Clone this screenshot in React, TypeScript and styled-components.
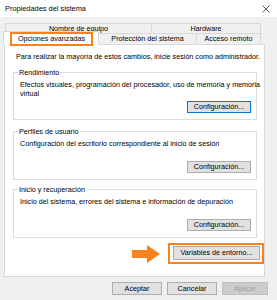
import styled, { createGlobalStyle } from "styled-components";

const GlobalStyle = createGlobalStyle`
  html, body {
    margin: 0;
    padding: 0;
    background: #f0f0f0;
  }
  body {
    font-family: "Liberation Sans", Arial, sans-serif;
    font-size: 7.2px;
    color: #000;
  }
`;

const Window = styled.div`
  width: 277px;
  height: 300px;
  overflow: hidden;
  background-color: #f0f0f0;
  display: flex;
  flex-direction: column;
`;

const TitleBar = styled.div`
  height: 17px;
  background-color: #fff;
  display: flex;
  align-items: center;
  justify-content: space-between;
  padding: 0 7px 0 5px;
  box-sizing: border-box;
  font-size: 7.4px;
`;

const Content = styled.div`
  padding: 6px 12px 0 4px;
  display: flex;
  flex-direction: column;
`;

const TabRow = styled.div<{ $front?: boolean }>`
  display: flex;
  align-items: flex-end;
  height: ${(p) => (p.$front ? 11 : 10)}px;
  margin-left: ${(p) => (p.$front ? -1 : 1)}px;
  position: relative;
  z-index: ${(p) => (p.$front ? 2 : 1)};
`;

const Tab = styled.div<{ $width: number; $first?: boolean }>`
  width: ${(p) => p.$width}px;
  height: 100%;
  box-sizing: border-box;
  border: 1px solid #d9d9d9;
  border-bottom: none;
  border-left: ${(p) => (p.$first ? "1px solid #d9d9d9" : "none")};
  background-color: #f0f0f0;
  display: flex;
  align-items: center;
  justify-content: center;
  line-height: 1;
  white-space: nowrap;
`;

const ActiveTab = styled.div`
  width: 96px;
  height: 14px;
  margin-bottom: -1px;
  box-sizing: border-box;
  border: 1px solid #d9d9d9;
  border-bottom: none;
  background-color: #fff;
`;

const Highlight = styled.div`
  border: 2.5px solid #f7821e;
  box-sizing: border-box;
  display: flex;
  align-items: center;
  justify-content: center;
`;

const ActiveLabel = styled(Highlight)`
  width: 83px;
  height: 14px;
  margin-left: 6px;
  line-height: 1;
  white-space: nowrap;
`;

const Panel = styled.div`
  height: 233px;
  box-sizing: border-box;
  background-color: #fff;
  border: 1px solid #d9d9d9;
  padding: 7px 7px 0 8px;
  display: flex;
  flex-direction: column;
`;

const Intro = styled.div`
  line-height: 10px;
  margin-left: 3px;
  white-space: nowrap;
`;

const Group = styled.section<{ $height: number; $gap: number }>`
  margin-top: ${(p) => p.$gap}px;
  padding: 0 5px 6px 6px;
  height: ${(p) => p.$height}px;
  box-sizing: border-box;
  border: 1px solid #dcdcdc;
  display: flex;
  flex-direction: column;
`;

const Legend = styled.div`
  align-self: flex-start;
  margin: -5px 0 0 -2px;
  padding: 0 1px;
  line-height: 9px;
  background-color: #fff;
  white-space: nowrap;
`;

const GroupText = styled.div`
  line-height: 9px;
  margin-top: 3px;
  white-space: nowrap;
`;

const ButtonRow = styled.div`
  margin-top: auto;
  display: flex;
  justify-content: flex-end;
`;

const Button = styled.button<{ $width: number; $focused?: boolean }>`
  width: ${(p) => p.$width}px;
  height: 12px;
  padding: 0;
  box-sizing: border-box;
  font-family: inherit;
  font-size: 7.2px;
  line-height: 1;
  color: #000;
  background-color: #e1e1e1;
  border: 1px solid ${(p) => (p.$focused ? "#0078d7" : "#adadad")};
  border-radius: 0;
  white-space: nowrap;

  &:disabled {
    color: #a0a0a0;
    background-color: #cccccc;
    border-color: #bfbfbf;
  }
`;

const EnvRow = styled.div`
  margin: 5px -7px 0 0;
  display: flex;
  justify-content: flex-end;
  align-items: center;
  gap: 8px;
`;

const EnvFrame = styled(Highlight)`
  width: 96px;
  height: 21px;
  padding: 1px 2px 2px 3px;
`;

const EnvButton = styled(Button)`
  height: 14px;
`;

const Footer = styled.div`
  display: flex;
  justify-content: flex-end;
  gap: 5px;
  padding: 5px 9px 0 0;
`;

const FooterButton = styled(Button)`
  height: 13px;
`;

const CloseIcon = () => (
  <svg width="8" height="8" viewBox="0 0 8 8">
    <path d="M0.5 0.5 L7.5 7.5 M7.5 0.5 L0.5 7.5" stroke="#333" strokeWidth="0.8" />
  </svg>
);

const Arrow = () => (
  <svg width="28" height="18" viewBox="0 0 28 18">
    <polygon points="0,5 15,5 15,0 28,9 15,18 15,13 0,13" fill="#f7841f" />
  </svg>
);

export default function App() {
  return (
    <>
      <GlobalStyle />
      <Window>
        <TitleBar>
          <span>Propiedades del sistema</span>
          <CloseIcon />
        </TitleBar>
        <Content>
          <TabRow>
            <Tab $width={147} $first>
              Nombre de equipo
            </Tab>
            <Tab $width={109}>Hardware</Tab>
          </TabRow>
          <TabRow $front>
            <ActiveTab>
              <ActiveLabel>Opciones avanzadas</ActiveLabel>
            </ActiveTab>
            <Tab $width={98}>Protección del sistema</Tab>
            <Tab $width={64}>Acceso remoto</Tab>
          </TabRow>
          <Panel>
            <Intro>
              Para realizar la mayoría de estos cambios, inicie sesión como administrador.
            </Intro>
            <Group $height={48} $gap={10}>
              <Legend>Rendimiento</Legend>
              <GroupText>
                Efectos visuales, programación del procesador, uso de memoria y memoria
                <br />
                virtual
              </GroupText>
              <ButtonRow>
                <Button $width={64} $focused>
                  Configuración...
                </Button>
              </ButtonRow>
            </Group>
            <Group $height={49} $gap={11}>
              <Legend>Perfiles de usuario</Legend>
              <GroupText>Configuración del escritorio correspondiente al inicio de sesión</GroupText>
              <ButtonRow>
                <Button $width={64}>Configuración...</Button>
              </ButtonRow>
            </Group>
            <Group $height={49} $gap={9}>
              <Legend>Inicio y recuperación</Legend>
              <GroupText>
                Inicio del sistema, errores del sistema e información de depuración
              </GroupText>
              <ButtonRow>
                <Button $width={64}>Configuración...</Button>
              </ButtonRow>
            </Group>
            <EnvRow>
              <Arrow />
              <EnvFrame>
                <EnvButton $width={87}>Variables de entorno...</EnvButton>
              </EnvFrame>
            </EnvRow>
          </Panel>
        </Content>
        <Footer>
          <FooterButton $width={50}>Aceptar</FooterButton>
          <FooterButton $width={50}>Cancelar</FooterButton>
          <FooterButton $width={46} disabled>
            Aplicar
          </FooterButton>
        </Footer>
      </Window>
    </>
  );
}
